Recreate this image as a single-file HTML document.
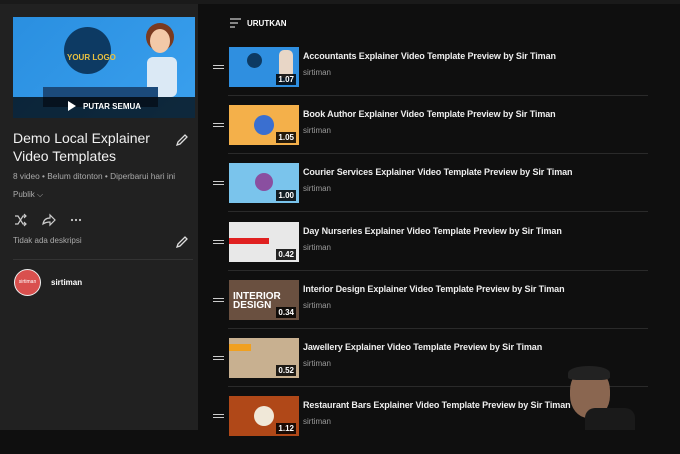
<!DOCTYPE html>
<html style="background:#0f0f0f"><head><meta charset="utf-8"><style>
*{margin:0;padding:0;box-sizing:border-box}
body{width:680px;height:430px;overflow:hidden;background:#0f0f0f;font-family:"Liberation Sans",sans-serif;position:relative;color:#fff}
.left{position:absolute;left:0;top:4px;width:198px;height:426px;background:#212121}
.a{position:absolute}
.row{position:absolute;left:212px;width:440px;height:58px}
.th{position:absolute;left:17px;top:0;width:70px;height:40px;overflow:hidden}
.dur{position:absolute;right:3px;bottom:2px;background:rgba(0,0,0,.85);font-size:8px;font-weight:bold;padding:1px 2px}
.t{position:absolute;left:91px;top:4px;font-size:9px;font-weight:bold;white-space:nowrap;color:#eee;letter-spacing:-0.1px}
.c{position:absolute;left:91px;top:21px;font-size:8px;color:#999}
.h{position:absolute;left:1px;top:18px;width:11px;height:4px;border-top:1.5px solid #ccc;border-bottom:1.5px solid #ccc}
.sep{position:absolute;left:16px;top:48px;width:420px;height:1px;background:#2a2a2a}
</style></head><body>
<div class="a" style="left:0;top:0;width:680px;height:4px;background:#1a1a1a"></div>
<div class="left"></div>
<div class="a" style="left:13px;top:17px;width:182px;height:101px;background:linear-gradient(135deg,#2a8fe0,#3aa0ee);overflow:hidden">
 <div class="a" style="left:51px;top:10px;width:47px;height:47px;border-radius:50%;background:#0d3a63"></div>
 <div class="a" style="left:54px;top:36px;font-size:8px;font-weight:bold;color:#e8c040">YOUR LOGO</div>
 <div class="a" style="left:133px;top:6px;width:28px;height:28px;border-radius:50%;background:#7a3a20"></div>
 <div class="a" style="left:137px;top:12px;width:20px;height:24px;border-radius:50%;background:#f3c9a8"></div>
 <div class="a" style="left:134px;top:40px;width:30px;height:40px;border-radius:6px;background:#dbe9f5"></div>
 <div class="a" style="left:30px;top:70px;width:115px;height:20px;background:#1b4a7a"></div>
 <div class="a" style="left:0;top:80px;width:182px;height:21px;background:rgba(0,0,0,.75)"></div>
 <div class="a" style="left:55px;top:84px;width:0;height:0;border-left:8px solid #fff;border-top:5px solid transparent;border-bottom:5px solid transparent"></div>
 <div class="a" style="left:70px;top:85px;font-size:8px;font-weight:bold">PUTAR SEMUA</div>
</div>
<div class="a" style="left:13px;top:129px;font-size:14px;line-height:18px;color:#f1f1f1">Demo Local Explainer<br>Video Templates</div>
<svg class="a" style="left:175px;top:133px" width="14" height="14" viewBox="0 0 14 14"><path d="M2 12l1-3 7-7 2 2-7 7z" fill="none" stroke="#ddd" stroke-width="1.3"/></svg>
<div class="a" style="left:13px;top:171px;font-size:8.3px;color:#aaa">8 video • Belum ditonton • Diperbarui hari ini</div>
<div class="a" style="left:13px;top:190px;font-size:8px;color:#aaa">Publik ⌵</div>
<svg class="a" style="left:14px;top:213px" width="72" height="14" viewBox="0 0 72 14"><path d="M1 3h3l5 8h3M1 11h3l5-8h3M10 1l2 2-2 2M10 9l2 2-2 2" fill="none" stroke="#ccc" stroke-width="1.2"/><path d="M29 11q1-6 7-6V2l5 5-5 5V9q-4 0-7 2z" fill="none" stroke="#ccc" stroke-width="1.2"/><circle cx="58" cy="7" r="1.1" fill="#ccc"/><circle cx="62" cy="7" r="1.1" fill="#ccc"/><circle cx="66" cy="7" r="1.1" fill="#ccc"/></svg>
<div class="a" style="left:13px;top:236px;font-size:8px;color:#aaa">Tidak ada deskripsi</div>
<svg class="a" style="left:175px;top:235px" width="14" height="14" viewBox="0 0 14 14"><path d="M2 12l1-3 7-7 2 2-7 7z" fill="none" stroke="#ddd" stroke-width="1.3"/></svg>
<div class="a" style="left:13px;top:259px;width:180px;height:1px;background:#333"></div>
<div class="a" style="left:14px;top:269px;width:27px;height:27px;border-radius:50%;background:#d9504e;border:1px solid #eee;font-size:5px;text-align:center;line-height:25px">sirtiman</div>
<div class="a" style="left:51px;top:278px;font-size:8px;font-weight:bold">sirtiman</div>

<svg class="a" style="left:230px;top:18px" width="12" height="10"><path d="M0 1h11M0 5h8M0 9h5" stroke="#ccc" stroke-width="1.3"/></svg>
<div class="a" style="left:247px;top:19px;font-size:8px;font-weight:bold">URUTKAN</div>

<div class="row" style="top:47px"><div class="h"></div><div class="th" style="background:#2f8fe0"><div class="a" style="left:18px;top:6px;width:15px;height:15px;border-radius:50%;background:#0d3a63"></div><div class="a" style="left:50px;top:3px;width:14px;height:28px;background:#e8d6c6;border-radius:5px"></div><div class="dur">1.07</div></div><div class="t">Accountants Explainer Video Template Preview by Sir Timan</div><div class="c">sirtiman</div><div class="sep"></div></div>
<div class="row" style="top:105px"><div class="h"></div><div class="th" style="background:#f4b04a"><div class="a" style="left:25px;top:10px;width:20px;height:20px;border-radius:50%;background:#3a6fd0"></div><div class="dur">1.05</div></div><div class="t">Book Author Explainer Video Template Preview by Sir Timan</div><div class="c">sirtiman</div><div class="sep"></div></div>
<div class="row" style="top:163px"><div class="h"></div><div class="th" style="background:#7ac4ec"><div class="a" style="left:26px;top:10px;width:18px;height:18px;border-radius:50%;background:#8a4fa0"></div><div class="dur">1.00</div></div><div class="t">Courier Services Explainer Video Template Preview by Sir Timan</div><div class="c">sirtiman</div><div class="sep"></div></div>
<div class="row" style="top:222px"><div class="h"></div><div class="th" style="background:#e8e8e8"><div class="a" style="left:0;top:16px;width:40px;height:6px;background:#e02020"></div><div class="dur">0.42</div></div><div class="t">Day Nurseries Explainer Video Template Preview by Sir Timan</div><div class="c">sirtiman</div><div class="sep"></div></div>
<div class="row" style="top:280px"><div class="h"></div><div class="th" style="background:#6a5040"><div class="a" style="left:4px;top:12px;font-size:10px;font-weight:bold;line-height:9px">INTERIOR<br>DESIGN</div><div class="dur">0.34</div></div><div class="t">Interior Design Explainer Video Template Preview by Sir Timan</div><div class="c">sirtiman</div><div class="sep"></div></div>
<div class="row" style="top:338px"><div class="h"></div><div class="th" style="background:#c8b090"><div class="a" style="left:0;top:6px;width:22px;height:7px;background:#f0a020"></div><div class="dur">0.52</div></div><div class="t">Jawellery Explainer Video Template Preview by Sir Timan</div><div class="c">sirtiman</div><div class="sep"></div></div>
<div class="row" style="top:396px"><div class="h"></div><div class="th" style="background:#b04818"><div class="a" style="left:25px;top:10px;width:20px;height:20px;border-radius:50%;background:#f0e8d8"></div><div class="dur">1.12</div></div><div class="t">Restaurant Bars Explainer Video Template Preview by Sir Timan</div><div class="c">sirtiman</div></div>

<div class="a" style="left:570px;top:368px;width:40px;height:50px;border-radius:45%;background:#8a6650"></div>
<div class="a" style="left:568px;top:366px;width:42px;height:14px;border-radius:50% 50% 20% 20%;background:#222"></div>
<div class="a" style="left:585px;top:408px;width:50px;height:22px;background:#1a1a1a;border-radius:10px 10px 0 0"></div>
</body></html>
